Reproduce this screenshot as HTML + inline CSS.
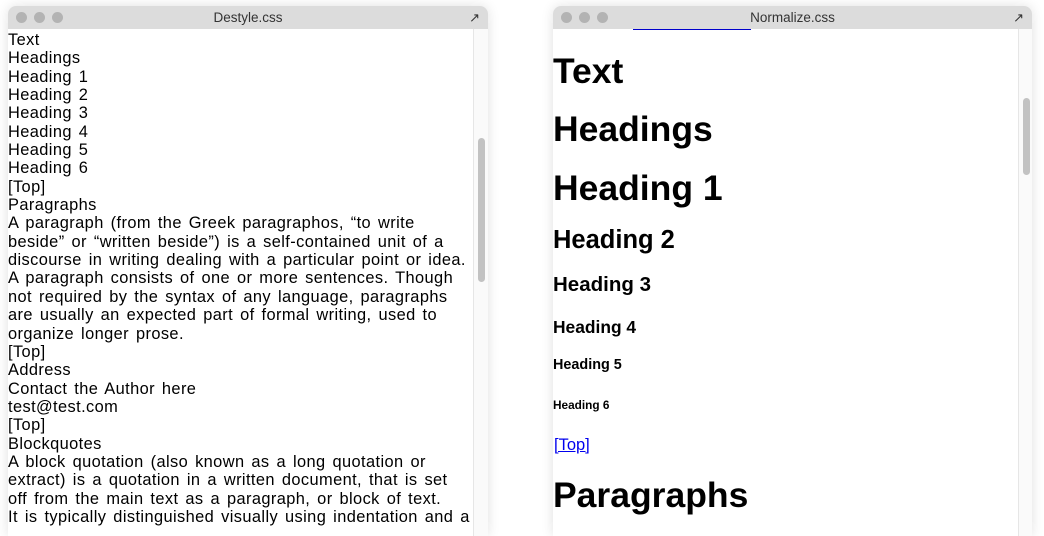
<!DOCTYPE html>
<html><head><meta charset="utf-8"><style>
body{margin:0;width:1044px;height:523px;background:#fff;position:relative;overflow:hidden;font-family:"Liberation Sans",sans-serif}
.win{position:absolute;top:6px;height:530px;background:#fff;border-radius:8px 8px 0 0;overflow:hidden;box-shadow:0 0 12px rgba(0,0,0,.12)}
.tb{position:absolute;left:0;right:0;top:0;height:23px;background:#dcdcdc;text-align:center;font-size:13.5px;line-height:23px;color:#333}
.d{position:absolute;top:6px;width:11px;height:11px;border-radius:50%;background:#b3b3b3}
.arr{position:absolute;right:8px;top:0;font-size:13px;color:#333}
.track{position:absolute;top:23px;bottom:0;width:14px;border-left:1px solid #e6e6e6;background:#fafafa}
.thumb{position:absolute;width:7px;border-radius:4px;background:#c2c2c2}
.lt{position:absolute;left:0;top:25px;font-size:16.4px;line-height:18.35px;color:#000;white-space:nowrap;letter-spacing:0.4px;word-spacing:2px}
.r{position:absolute;left:0;font-weight:bold;white-space:nowrap;color:#000}
</style></head><body>
<div class="win" style="left:8px;width:480px">
<div class="tb"><span class="d" style="left:8px"></span><span class="d" style="left:26px"></span><span class="d" style="left:44px"></span>Destyle.css<span class="arr">↗</span></div>
<div class="lt">Text<br>Headings<br>Heading 1<br>Heading 2<br>Heading 3<br>Heading 4<br>Heading 5<br>Heading 6<br>[Top]<br>Paragraphs<br>A paragraph (from the Greek paragraphos, “to write<br>beside” or “written beside”) is a self-contained unit of a<br>discourse in writing dealing with a particular point or idea.<br>A paragraph consists of one or more sentences. Though<br>not required by the syntax of any language, paragraphs<br>are usually an expected part of formal writing, used to<br>organize longer prose.<br>[Top]<br>Address<br>Contact the Author here<br>test@test.com<br>[Top]<br>Blockquotes<br>A block quotation (also known as a long quotation or<br>extract) is a quotation in a written document, that is set<br>off from the main text as a paragraph, or block of text.<br>It is typically distinguished visually using indentation and a</div>
<div class="track" style="left:465px"></div>
<div class="thumb" style="left:470px;top:132px;height:144px"></div>
</div>
<div class="win" style="left:553px;width:479px">
<div class="tb"><span class="d" style="left:8px"></span><span class="d" style="left:26px"></span><span class="d" style="left:44px"></span>Normalize.css<span class="arr">↗</span></div>
<div style="position:absolute;left:80px;top:23px;width:118px;height:1px;background:#00c"></div>
<div class="r" style="top:45px;font-size:35.5px">Text</div>
<div class="r" style="top:103px;font-size:35.5px">Headings</div>
<div class="r" style="top:162px;font-size:35.5px">Heading 1</div>
<div class="r" style="top:220px;font-size:25.5px">Heading 2</div>
<div class="r" style="top:267px;font-size:20.5px">Heading 3</div>
<div class="r" style="top:311px;font-size:17.4px">Heading 4</div>
<div class="r" style="top:351px;font-size:14.4px">Heading 5</div>
<div class="r" style="top:392px;font-size:11.8px">Heading 6</div>
<div style="position:absolute;left:1px;top:430px;font-size:16.5px;color:#00e;text-decoration:underline">[Top]</div>
<div class="r" style="top:469px;font-size:35.5px">Paragraphs</div>
<div class="track" style="left:465px"></div>
<div class="thumb" style="left:470px;top:92px;height:77px"></div>
</div>
</body></html>
